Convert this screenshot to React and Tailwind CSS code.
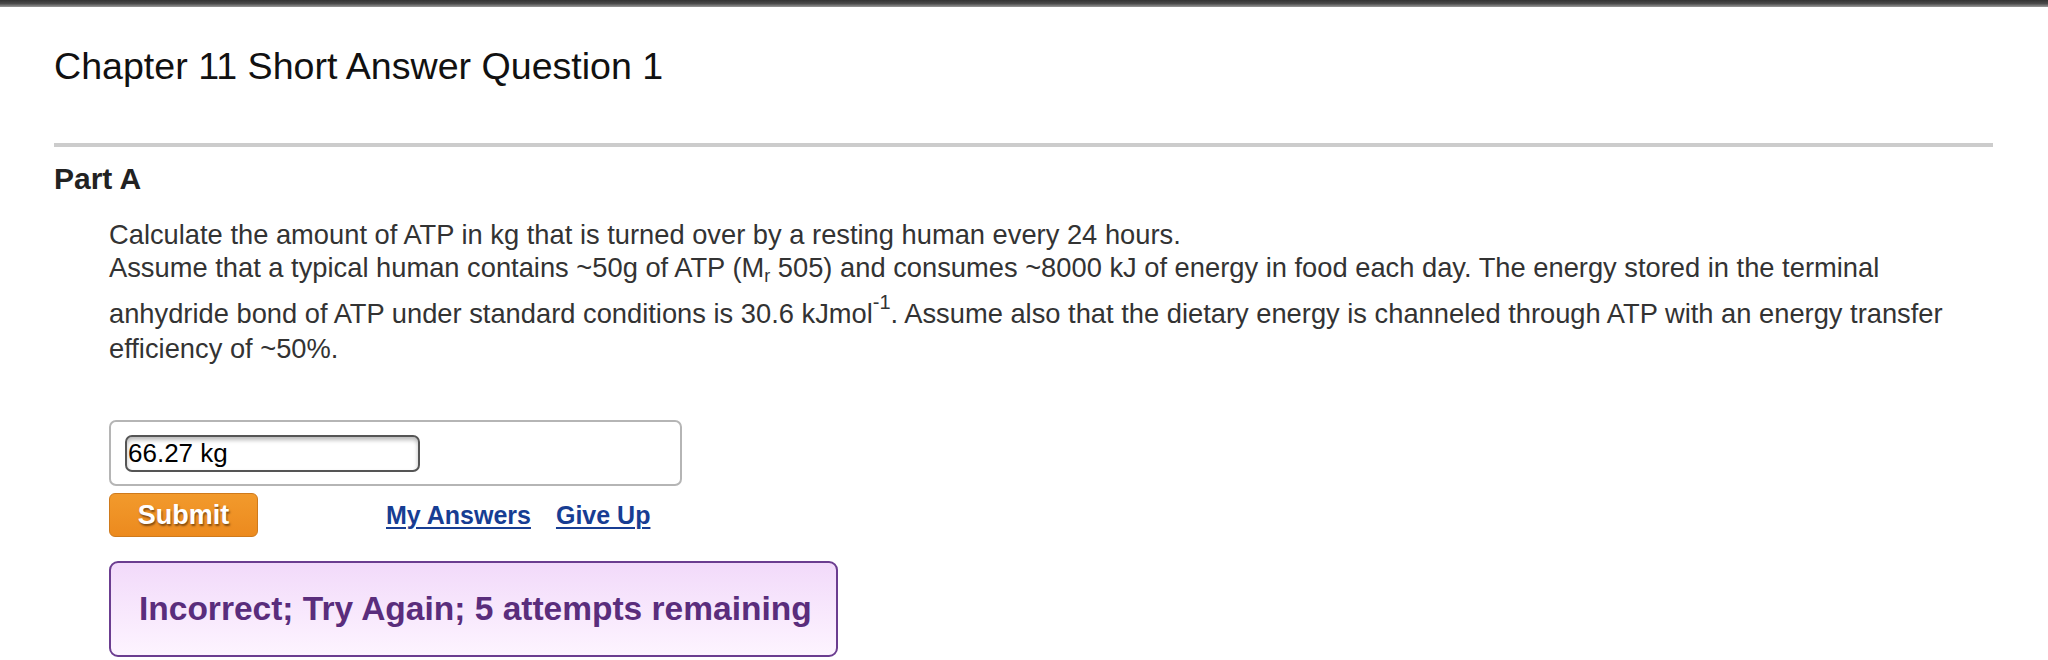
import React from 'react';

const font = { fontFamily: '"Liberation Sans", Arial, Helvetica, sans-serif' };

export default function App() {
  return (
    <div className="w-[2048px] h-[660px] bg-white overflow-hidden" style={font}>
      {/* top bar */}
      <div className="h-[7px] bg-gradient-to-b from-[#333333] via-[#4a4a4a] to-[#9a9a9a]" />

      <div className="pl-[54px] pr-[55px]">
        <h1 className="mt-[38px] text-[37.6px] leading-[42px] text-[#111111]">
          Chapter 11 Short Answer Question 1
        </h1>

        <div className="mt-[56px] h-[4px] bg-[#cccccc]" />

        <h2 className="mt-[15px] text-[30px] leading-[33px] font-bold text-[#222222]">Part A</h2>

        <div className="ml-[55px]">
          {/* question text */}
          <div className="mt-[23px] text-[27.3px] leading-[33px] text-[#333333] whitespace-nowrap">
            <div>Calculate the amount of ATP in kg that is turned over by a resting human every 24 hours.</div>
            <div>
              Assume that a typical human contains ~50g of ATP (M<sub className="text-[18px]">r</sub> 505) and consumes
              ~8000 kJ of energy in food each day. The energy stored in the terminal
            </div>
            <div className="mt-[13px]">
              anhydride bond of ATP under standard conditions is 30.6 kJmol
              <sup className="text-[20px] -top-[0.7em]">-1</sup>. Assume also that the dietary energy is channeled
              through ATP with an energy transfer
            </div>
            <div className="mt-[2px]">efficiency of ~50%.</div>
          </div>

          {/* answer box */}
          <div className="mt-[55px] w-[573px] h-[66px] border-2 border-[#b5b5b5] rounded-[7px] pl-[14px] pt-[13px]">
            <div className="w-[295px] h-[37px] border-2 border-[#555555] rounded-[7px] shadow-[inset_0_3px_4px_rgba(0,0,0,0.28)] pl-[1px] text-[26px] leading-[33px] text-black">
              66.27 kg
            </div>
          </div>

          {/* actions */}
          <div className="mt-[7px] flex items-center">
            <button className="w-[149px] h-[44px] rounded-[6px] border border-[#cf7a1c] bg-gradient-to-b from-[#f29a2c] to-[#ec8a1e] text-white font-bold text-[27px] leading-none [text-shadow:1px_2px_2px_rgba(60,30,0,0.6)]">
              Submit
            </button>
            <div className="ml-[128px] flex gap-[25px] text-[25px] leading-[30px] font-bold text-[#173d93]">
              <a href="#" className="underline underline-offset-[3px] decoration-2">My Answers</a>
              <a href="#" className="underline underline-offset-[3px] decoration-2">Give Up</a>
            </div>
          </div>

          {/* feedback */}
          <div className="mt-[24px] w-[729px] h-[96px] border-2 border-[#6b3d90] rounded-[9px] bg-gradient-to-b from-[#f2dafa] to-[#fdf4ff] flex items-center pl-[28px]">
            <span className="text-[33.5px] font-bold text-[#5a2d7c]">Incorrect; Try Again; 5 attempts remaining</span>
          </div>
        </div>
      </div>
    </div>
  );
}
